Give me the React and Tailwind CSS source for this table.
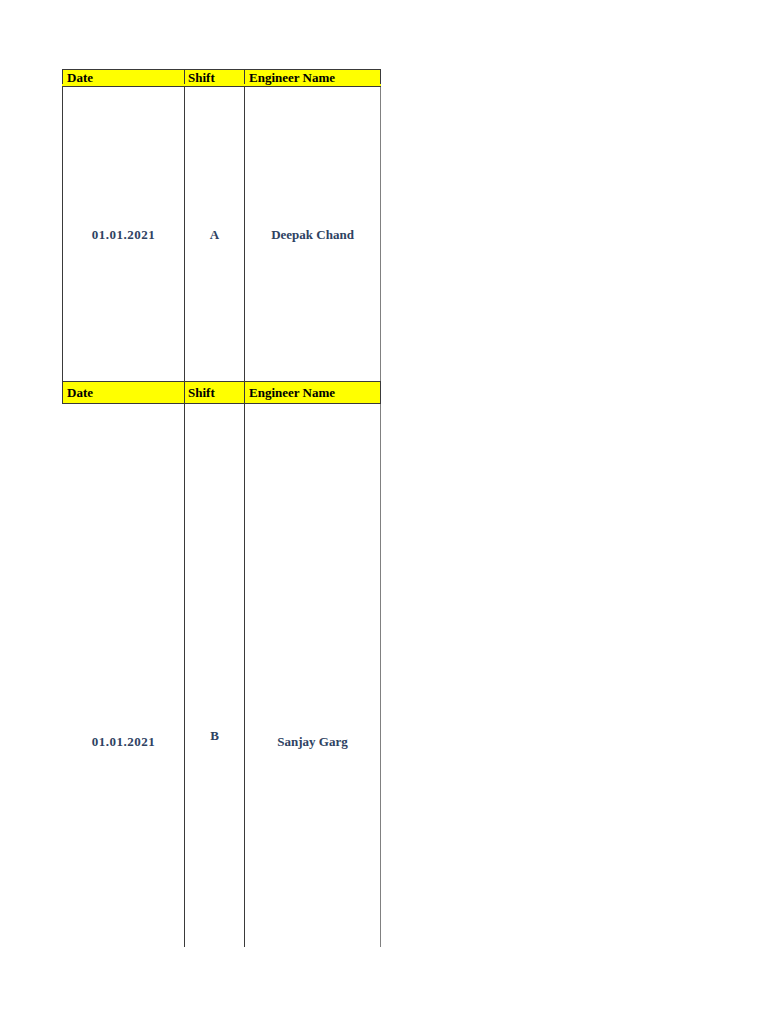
export default function App() {
  const font = { fontFamily: '"Liberation Serif", "Times New Roman", serif' };
  return (
    <div className="min-h-[1024px] w-[768px] bg-white pl-[62px] pt-[69px]" style={font}>
      <div className="w-[319px] text-[13px] font-bold leading-none">
        {/* Header 1 */}
        <div className="flex h-[18px] border-y border-[#3a3a3a] bg-[#ffff00] pb-[2px] text-black">
          <div className="flex w-[122px] items-center border-l border-[#3a3a3a] pl-[4px]">Date</div>
          <div className="flex w-[60px] items-center border-l border-[#3a3a3a] pl-[3px]">Shift</div>
          <div className="flex w-[137px] items-center border-x border-[#3a3a3a] pl-[4px]">Engineer Name</div>
        </div>
        {/* Body 1 */}
        <div className="flex h-[294px] text-[#2e4262]">
          <div className="flex w-[122px] items-center justify-center border-l border-[#3a3a3a] tracking-[0.5px]">01.01.2021</div>
          <div className="flex w-[60px] items-center justify-center border-l border-[#3a3a3a]">A</div>
          <div className="flex w-[137px] items-center justify-center border-l border-[#3a3a3a] border-r border-r-[#808080]">Deepak Chand</div>
        </div>
        {/* Header 2 */}
        <div className="flex h-[23px] border-y border-[#3a3a3a] bg-[#ffff00] text-black">
          <div className="flex w-[122px] items-center border-l border-[#3a3a3a] pl-[4px]">Date</div>
          <div className="flex w-[60px] items-center border-l border-[#3a3a3a] pl-[3px]">Shift</div>
          <div className="flex w-[137px] items-center border-x border-[#3a3a3a] pl-[4px]">Engineer Name</div>
        </div>
        {/* Body 2 */}
        <div className="flex h-[543px] text-[#2e4262]">
          <div className="flex w-[122px] justify-center border-l border-transparent pt-[331px] tracking-[0.5px]">01.01.2021</div>
          <div className="flex w-[60px] justify-center border-l border-[#3a3a3a] pt-[325px]">B</div>
          <div className="flex w-[137px] justify-center border-l border-[#3a3a3a] border-r border-r-[#808080] pt-[331px]">Sanjay Garg</div>
        </div>
      </div>
    </div>
  );
}
